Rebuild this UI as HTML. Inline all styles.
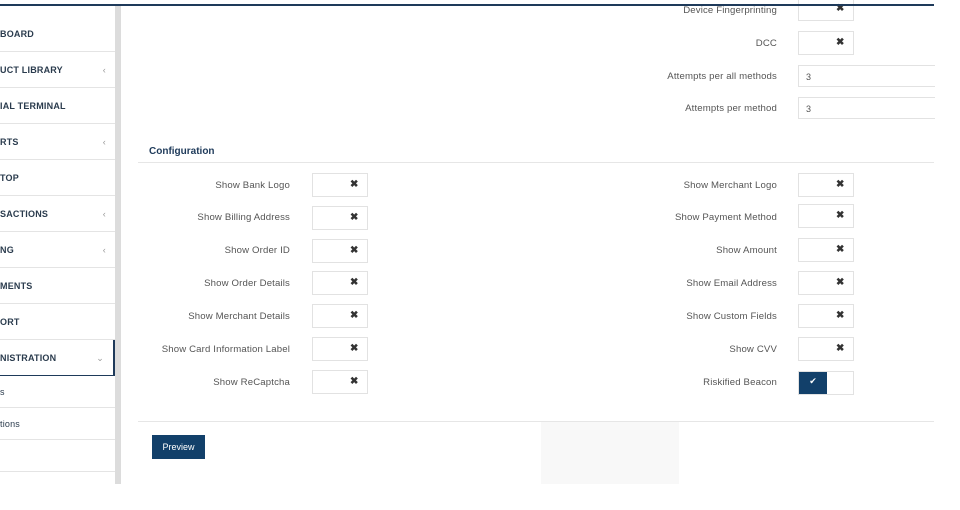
<!DOCTYPE html>
<html><head><style>
body{margin:0;width:960px;height:510px;background:#fff;position:relative;overflow:hidden;font-family:"Liberation Sans",sans-serif;}
.topline{position:absolute;left:0;top:4px;width:934px;height:2px;background:#1e3a5a;z-index:5;}
.side{position:absolute;left:0;top:6px;width:115px;height:478px;background:#fff;}
.bar{position:absolute;left:115px;top:6px;width:6px;height:478px;background:#dcdcdc;}
.it{position:absolute;left:0;width:115px;height:35px;border-bottom:1px solid #e4e4e4;font-size:9px;font-weight:bold;color:#2a3b4d;line-height:37px;letter-spacing:0.2px;}
.it .ch{position:absolute;right:9px;top:0;color:#999;font-weight:normal;}
.sub{font-weight:normal;font-size:9px;}
.main{position:absolute;left:121px;top:6px;width:813px;height:478px;background:#fff;}
.lbl{position:absolute;font-size:9.6px;color:#555;text-align:right;letter-spacing:0.15px;}
.box{position:absolute;width:54px;height:22px;border:1px solid #e2e2e2;background:#fff;}
.box span{position:absolute;left:37px;top:5px;font-size:10px;color:#333;font-weight:bold;}
.inp{position:absolute;left:798px;width:136px;height:20px;border:1px solid #e2e2e2;border-right:none;font-size:9px;color:#555;line-height:22px;text-indent:7px;}
</style></head><body>
<div class="topline"></div>
<div class="side">
<div class="it" style="top:10px">BOARD</div>
<div class="it" style="top:46px">UCT LIBRARY<span class="ch">&lsaquo;</span></div>
<div class="it" style="top:82px">IAL TERMINAL</div>
<div class="it" style="top:118px">RTS<span class="ch">&lsaquo;</span></div>
<div class="it" style="top:154px">TOP</div>
<div class="it" style="top:190px">SACTIONS<span class="ch">&lsaquo;</span></div>
<div class="it" style="top:226px">NG<span class="ch">&lsaquo;</span></div>
<div class="it" style="top:262px">MENTS</div>
<div class="it" style="top:298px">ORT</div>
<div class="it" style="top:334px;border-right:2px solid #1e3a5a;border-bottom:1px solid #1e3a5a;width:113px">NISTRATION<span class="ch">&#8964;</span></div>
<div class="it sub" style="top:370px;height:31px;line-height:33px">s</div>
<div class="it sub" style="top:402px;height:31px;line-height:33px">tions</div>
<div class="it sub" style="top:434px;height:31px"></div>
</div>
<div class="bar"></div>
<div class="main"></div>

<div class="lbl" style="right:183px;top:5px">Device Fingerprinting</div>
<div class="box" style="left:798px;top:-3px"><span>&#10006;</span></div>
<div class="lbl" style="right:183px;top:38px">DCC</div>
<div class="box" style="left:798px;top:31px"><span>&#10006;</span></div>
<div class="lbl" style="right:183px;top:71px">Attempts per all methods</div>
<div class="inp" style="top:65px">3</div>
<div class="lbl" style="right:183px;top:103px">Attempts per method</div>
<div class="inp" style="top:97px">3</div>

<div style="position:absolute;left:149px;top:146px;font-size:10px;font-weight:bold;color:#1e3a5a">Configuration</div>
<div style="position:absolute;left:138px;top:162px;width:796px;height:1px;background:#e6e6e6"></div>

<div class="lbl" style="right:670px;top:180px">Show Bank Logo</div><div class="box" style="left:312px;top:173px"><span>&#10006;</span></div>
<div class="lbl" style="right:670px;top:212px">Show Billing Address</div><div class="box" style="left:312px;top:206px"><span>&#10006;</span></div>
<div class="lbl" style="right:670px;top:245px">Show Order ID</div><div class="box" style="left:312px;top:239px"><span>&#10006;</span></div>
<div class="lbl" style="right:670px;top:278px">Show Order Details</div><div class="box" style="left:312px;top:271px"><span>&#10006;</span></div>
<div class="lbl" style="right:670px;top:311px">Show Merchant Details</div><div class="box" style="left:312px;top:304px"><span>&#10006;</span></div>
<div class="lbl" style="right:670px;top:344px">Show Card Information Label</div><div class="box" style="left:312px;top:337px"><span>&#10006;</span></div>
<div class="lbl" style="right:670px;top:377px">Show ReCaptcha</div><div class="box" style="left:312px;top:370px"><span>&#10006;</span></div>

<div class="lbl" style="right:183px;top:180px">Show Merchant Logo</div><div class="box" style="left:798px;top:173px"><span>&#10006;</span></div>
<div class="lbl" style="right:183px;top:212px">Show Payment Method</div><div class="box" style="left:798px;top:204px"><span>&#10006;</span></div>
<div class="lbl" style="right:183px;top:245px">Show Amount</div><div class="box" style="left:798px;top:238px"><span>&#10006;</span></div>
<div class="lbl" style="right:183px;top:278px">Show Email Address</div><div class="box" style="left:798px;top:271px"><span>&#10006;</span></div>
<div class="lbl" style="right:183px;top:311px">Show Custom Fields</div><div class="box" style="left:798px;top:304px"><span>&#10006;</span></div>
<div class="lbl" style="right:183px;top:344px">Show CVV</div><div class="box" style="left:798px;top:337px"><span>&#10006;</span></div>
<div class="lbl" style="right:183px;top:377px">Riskified Beacon</div>
<div class="box" style="left:798px;top:371px"><div style="position:absolute;left:0;top:0;width:28px;height:22px;background:#12406a;color:#fff;font-size:9px;text-align:center;line-height:18px">&#10004;</div></div>

<div style="position:absolute;left:138px;top:421px;width:796px;height:1px;background:#e6e6e6"></div>
<div style="position:absolute;left:541px;top:422px;width:138px;height:62px;background:#f8f8f8"></div>
<div style="position:absolute;left:152px;top:435px;width:53px;height:24px;background:#12406a;color:#fff;font-size:9px;text-align:center;line-height:24px">Preview</div>
</body></html>
